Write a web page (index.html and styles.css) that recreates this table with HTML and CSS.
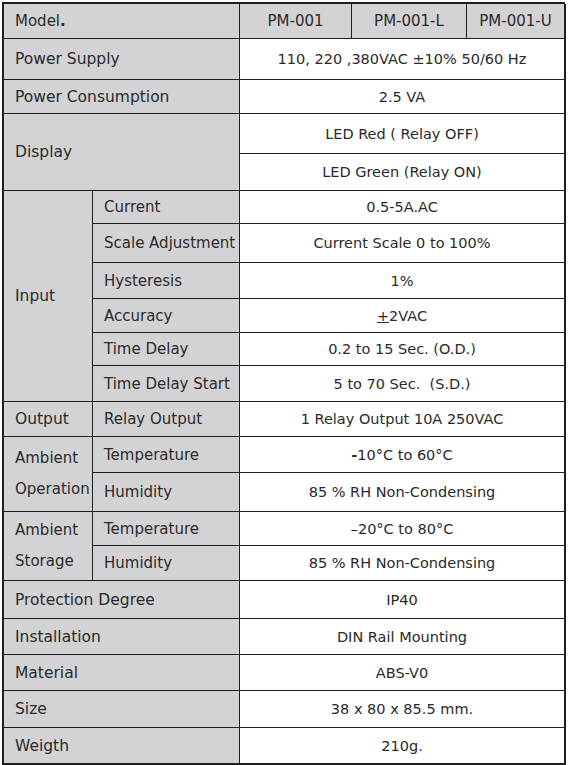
FILE: index.html
```html
<!DOCTYPE html>
<html>
<head>
<meta charset="utf-8">
<link rel="stylesheet" href="styles.css">
</head>
<body>
<div class="spec">
  <div class="c lab span2 head">Model<b>.</b></div>
  <div class="c val head">PM-001</div>
  <div class="c val head">PM-001-L</div>
  <div class="c val head last">PM-001-U</div>

  <div class="c lab span2">Power Supply</div>
  <div class="c val full">110, 220 ,380VAC ±10% 50/60 Hz</div>

  <div class="c lab span2">Power Consumption</div>
  <div class="c val full">2.5 VA</div>

  <div class="c lab span2 r2">Display</div>
  <div class="c val full">LED Red ( Relay OFF)</div>
  <div class="c val full">LED Green (Relay ON)</div>

  <div class="c lab r6">Input</div>
  <div class="c lab sub">Current</div>
  <div class="c val full">0.5-5A.AC</div>
  <div class="c lab sub">Scale Adjustment</div>
  <div class="c val full">Current Scale 0 to 100%</div>
  <div class="c lab sub">Hysteresis</div>
  <div class="c val full">1%</div>
  <div class="c lab sub">Accuracy</div>
  <div class="c val full"><u>+</u>2VAC</div>
  <div class="c lab sub">Time Delay</div>
  <div class="c val full">0.2 to 15 Sec. (O.D.)</div>
  <div class="c lab sub">Time Delay Start</div>
  <div class="c val full">5 to 70 Sec.&nbsp; (S.D.)</div>

  <div class="c lab">Output</div>
  <div class="c lab sub">Relay Output</div>
  <div class="c val full">1 Relay Output 10A 250VAC</div>

  <div class="c lab r2 two">Ambient<br>Operation</div>
  <div class="c lab sub">Temperature</div>
  <div class="c val full"><b class="neg">-</b>10°C to 60°C</div>
  <div class="c lab sub">Humidity</div>
  <div class="c val full">85 % RH Non-Condensing</div>

  <div class="c lab r2 two">Ambient<br>Storage</div>
  <div class="c lab sub">Temperature</div>
  <div class="c val full">–20°C to 80°C</div>
  <div class="c lab sub">Humidity</div>
  <div class="c val full">85 % RH Non-Condensing</div>

  <div class="c lab span2">Protection Degree</div>
  <div class="c val full">IP40</div>
  <div class="c lab span2">Installation</div>
  <div class="c val full">DIN Rail Mounting</div>
  <div class="c lab span2">Material</div>
  <div class="c val full">ABS-V0</div>
  <div class="c lab span2">Size</div>
  <div class="c val full">38 x 80 x 85.5 mm.</div>
  <div class="c lab span2 bottom">Weigth</div>
  <div class="c val full bottom">210g.</div>
</div>
</body>
</html>
```
FILE: styles.css
```css
* { box-sizing: border-box; }
html, body { margin: 0; padding: 0; background: #ffffff; }
body {
  font-family: "DejaVu Sans", "Liberation Sans", sans-serif;
  font-size: 14.5px;
  color: #2a2a2a;
}
.spec {
  margin: 2px 0 0 2px;
  width: 563px;
  display: grid;
  grid-template-columns: 89px 147px 112px 115px 99px;
  grid-template-rows: 35px 41px 34px 40px 37px 33px 39px 36px 34px 33px 36px 35px 36px 39px 34px 35px 38px 36px 36px 37px 37px;
  border-left: 2px solid #1e1e1e;
  border-top: 2px solid #1e1e1e;
}
.c {
  border-right: 1px solid #1e1e1e;
  border-bottom: 1px solid #1e1e1e;
  display: flex;
  align-items: center;
  white-space: nowrap;
}
.lab {
  background: #d3d3d5;
  padding-left: 11px;
  font-size: 15.5px;
}
.sub { padding-left: 11px; font-size: 15px; }
.val {
  justify-content: center;
  background: #ffffff;
}
.head { background: #d3d3d5; font-size: 15px; }
.span2 { grid-column: 1 / 3; }
.full { grid-column: 3 / 6; }
.r2 { grid-row: span 2; }
.r6 { grid-row: span 6; }
.two { line-height: 31px; font-size: 15px; }
.last, .full { border-right-width: 2px; }
.bottom { border-bottom-width: 2px; }
b { font-weight: bold; }
u { text-decoration: underline; }
```
